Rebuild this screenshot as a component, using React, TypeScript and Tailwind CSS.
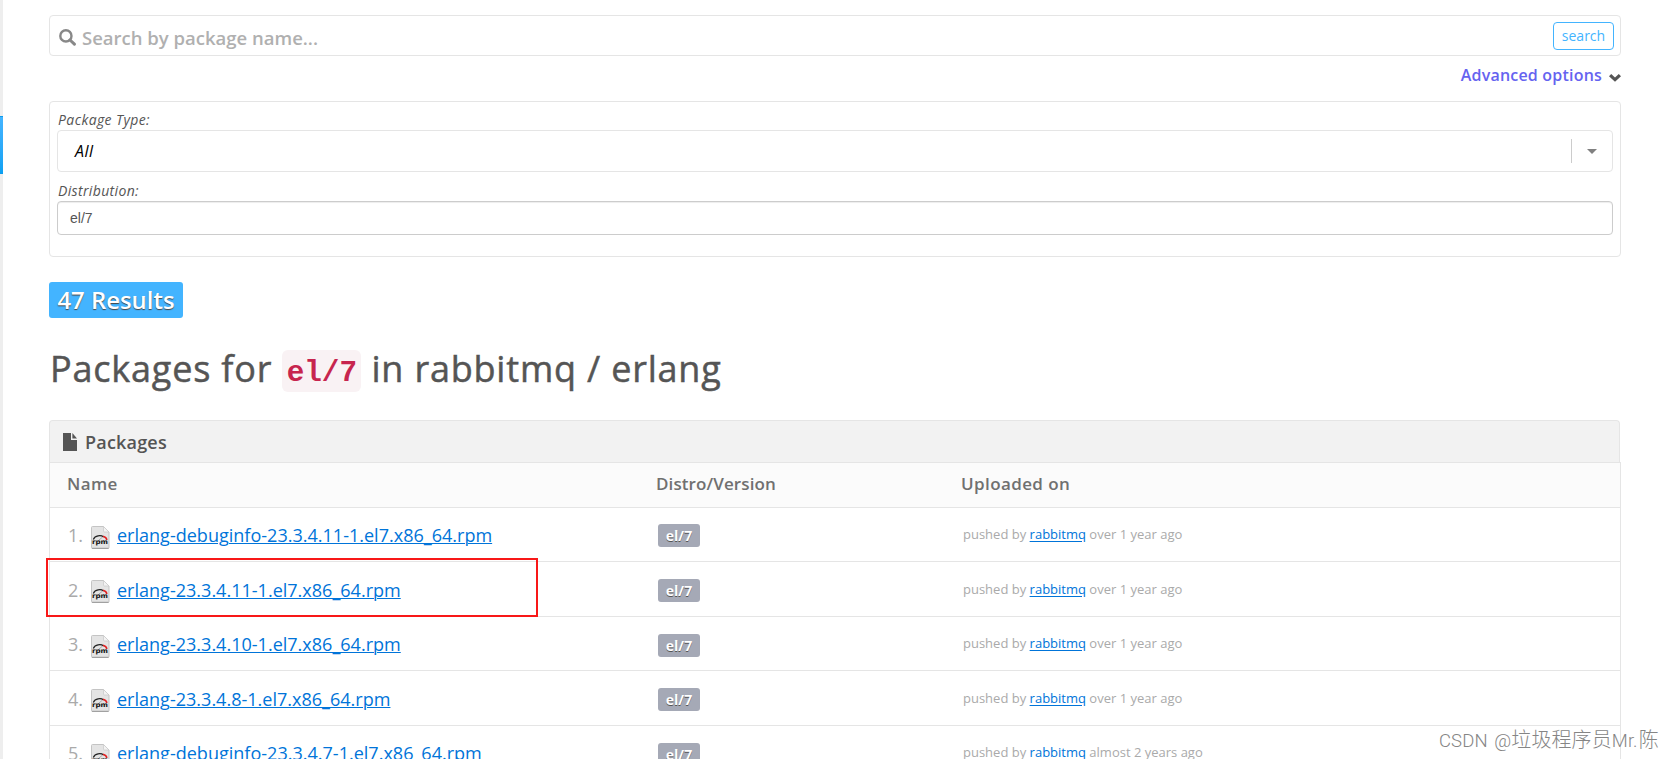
import React from "react";

interface Package {
  name: string;
  distro: string;
  user: string;
  uploaded: string;
}

const packages: Package[] = [
  {
    name: "erlang-debuginfo-23.3.4.11-1.el7.x86_64.rpm",
    distro: "el/7",
    user: "rabbitmq",
    uploaded: "over 1 year ago",
  },
  {
    name: "erlang-23.3.4.11-1.el7.x86_64.rpm",
    distro: "el/7",
    user: "rabbitmq",
    uploaded: "over 1 year ago",
  },
  {
    name: "erlang-23.3.4.10-1.el7.x86_64.rpm",
    distro: "el/7",
    user: "rabbitmq",
    uploaded: "over 1 year ago",
  },
  {
    name: "erlang-23.3.4.8-1.el7.x86_64.rpm",
    distro: "el/7",
    user: "rabbitmq",
    uploaded: "over 1 year ago",
  },
  {
    name: "erlang-debuginfo-23.3.4.7-1.el7.x86_64.rpm",
    distro: "el/7",
    user: "rabbitmq",
    uploaded: "almost 2 years ago",
  },
];

const SearchIcon = () => (
  <svg className="mt-1 h-[17px] w-[17px] shrink-0" viewBox="0 0 17 17" fill="none">
    <circle cx="6.9" cy="6.9" r="5.6" stroke="#888" strokeWidth="2.4" />
    <path d="M11 11l4.4 4.2" stroke="#888" strokeWidth="3" strokeLinecap="round" />
  </svg>
);

const ChevronIcon = () => (
  <svg className="mt-[2px] h-[9px] w-3 shrink-0" viewBox="0 0 12 9">
    <path d="M0 3.2L2.2 1 6 4.5 9.8 1 12 3.2 6 8.8z" fill="#555" />
  </svg>
);

const FileIcon = () => (
  <svg className="h-[18px] w-[14px] shrink-0" viewBox="0 0 14 18">
    <path d="M0 0h8v7h6v11H0z" fill="#555" />
    <path d="M9.4 0L14 5.6H9.4z" fill="#555" />
  </svg>
);

const RpmIcon = () => (
  <svg className="h-[23px] w-[19px] shrink-0" viewBox="0 0 19 23">
    <path
      d="M1.5.5h11l5.500 5.500v15.500q0 1-1 1h-15.500q-1 0-1-1v-20q0-1 1-1z"
      fill="#e4e4e4"
      stroke="#c4c4c4"
    />
    <path d="M12.500.5v4.500q0 1 1 1h4.500z" fill="#f3f3f3" stroke="#c8c8c8" strokeWidth=".7" />
    <path d="M1 22.300h16.500" stroke="#999" strokeWidth="1" />
    <path d="M2.300 13.500C4 9.300 10 8.800 12.500 11" fill="none" stroke="#222" strokeWidth="1.200" />
    <path d="M12 10.300C14.500 11 15.600 12.300 15.900 14" fill="none" stroke="#e02020" strokeWidth="1.500" />
    <path d="M8 14l3-2.500" stroke="#999" strokeWidth=".8" />
    <text
      x="1"
      y="17.500"
      fontFamily="DejaVu Sans"
      fontWeight="700"
      fontSize="6.600"
      textLength="16"
      lengthAdjust="spacingAndGlyphs"
      fill="#111"
    >
      rpm
    </text>
  </svg>
);

const SearchBar = () => (
  <div className="flex h-[41px] items-center rounded border border-[#e5e5e5] pr-[6px] pl-[9px]">
    <SearchIcon />
    <div className="ml-[6px] flex-1 pt-[5px] text-[18.500px] leading-[30px] font-semibold text-[#b0b0b0]">
      Search by package name...
    </div>
    <button className="h-7 w-[61px] rounded border border-[#43b4ff] text-sm leading-[25px] text-[#43b4ff]">
      search
    </button>
  </div>
);

const Filters = () => (
  <div className="mt-[11px] h-[156px] rounded border border-[#e5e5e5] px-[7px] pt-[7px] text-sm text-[#555]">
    <div className="h-[21px] pl-px leading-[21px] tracking-[0.4px] italic">Package Type:</div>
    <div className="flex h-[42px] items-center rounded border border-[#e5e5e5] pl-[17px] text-base text-black italic">
      <span className="flex-1 tracking-[0.5px]">All</span>
      <span className="h-6 w-px bg-[#ccc]" />
      <svg className="mr-[15px] ml-[15px] h-[5px] w-[10px]" viewBox="0 0 10 5">
        <path d="M0 0h10L5 5z" fill="#808080" />
      </svg>
    </div>
    <div className="mt-2 h-[21px] pl-px leading-[21px] tracking-[0.35px] italic">Distribution:</div>
    <div className="h-[34px] rounded border border-[#ccc] pl-3 font-['Liberation_Sans',sans-serif] leading-8 shadow-[inset_0_1px_1px_rgba(0,0,0,0.075)]">
      el/7
    </div>
  </div>
);

const PackageRow = ({ pkg, index }: { pkg: Package; index: number }) => (
  <div className="flex h-[54.600px] shrink-0 border-b border-[#e5e5e5] pt-[0.400px]">
    <div className="flex w-[608px] pl-[18px] text-[18.040px] leading-[55px]">
      <span className="w-[22px] text-[#aaa]">{index + 1}.</span>
      <span className="mt-[17.600px] mr-[7.500px] ml-[0.500px]">
        <RpmIcon />
      </span>
      <a href="#" className="text-[#0074d9] underline decoration-1 underline-offset-[1px]">
        {pkg.name}
      </a>
    </div>
    <div className="w-[305px]">
      <span className="mt-[16.400px] block h-[23px] w-[42px] rounded-[3px] bg-[#a5a9b6] text-center text-sm leading-[23px] font-bold text-white [text-shadow:0_1px_0_#555]">
        {pkg.distro}
      </span>
    </div>
    <div className="text-[13px] leading-[53.400px] text-[#aaa]">
      pushed by{" "}
      <a href="#" className="text-[#0074d9] underline underline-offset-2">
        {pkg.user}
      </a>{" "}
      {pkg.uploaded}
    </div>
  </div>
);

const PackageTable = () => (
  <div>
    <div className="mr-px flex h-[42px] items-center rounded-t border border-b-0 border-[#e5e5e5] bg-[#f2f2f2] pl-[13px] text-lg font-semibold text-[#555]">
      <FileIcon />
      <span className="ml-2 tracking-[0.2px]">Packages</span>
    </div>
    <div className="border border-b-0 border-[#e5e5e5]">
      <div className="flex h-[44.600px] border-b border-[#e5e5e5] bg-[#fbfbfb] text-[17px] leading-[42px] font-semibold text-[#707070]">
        <div className="w-[606px] pl-[17px] tracking-[0.4px]">Name</div>
        <div className="w-[305px] tracking-[0.1px]">Distro/Version</div>
        <div className="tracking-[0.4px]">Uploaded on</div>
      </div>
      {packages.map((pkg, index) => (
        <PackageRow key={pkg.name} pkg={pkg} index={index} />
      ))}
    </div>
  </div>
);

const App: React.FC = () => {
  return (
    <div className="relative flex h-[759px] w-[1674px] overflow-hidden bg-white font-['Open_Sans','Noto_Sans_CJK_SC',sans-serif]">
      <aside className="w-[3px] shrink-0 bg-[#eee] pt-[116px]">
        <div className="h-[58px] border-y border-[#0c9bec] bg-gradient-to-b from-[#43b4ff] to-[#0ba1f3]" />
      </aside>

      <main className="ml-[46px] w-[1572px] pt-[15px]">
        <SearchBar />
        <div className="mt-[7px] flex h-[27px] items-center justify-end text-base font-semibold text-[#6563f0]">
          <span className="mr-[7px] pb-[3px] tracking-[0.2px]">Advanced options</span>
          <ChevronIcon />
        </div>
        <Filters />

        <div className="mt-[25px] h-9 w-[134px] rounded-[3px] bg-[#43b4ff] text-center text-[23.900px] leading-9 font-semibold text-white [text-shadow:0_1px_1px_#444]">
          47 Results
        </div>

        <h1 className="mt-[26px] flex h-[50px] items-center pl-px text-4xl tracking-[0.8px] whitespace-pre text-[#555] [-webkit-text-stroke:0.5px_#555]">
          <span>Packages for </span>
          <code className="mt-[4px] h-[42px] w-[79px] rounded-md bg-[#f9f2f4] text-center font-['Liberation_Mono',monospace] text-[29.300px] leading-[47px] font-bold tracking-normal text-[#c7254e] [-webkit-text-stroke:0]">
            el/7
          </code>
          <span> in rabbitmq / erlang</span>
        </h1>

        <div className="mt-[26px]">
          <PackageTable />
        </div>
      </main>

      {/* highlighted package */}
      <div className="absolute top-[558px] left-[46px] h-[59px] w-[492px] border-2 border-[#f81818]" />

      <div className="absolute top-[726px] left-[1439px] font-['Roboto','Noto_Sans_CJK_SC',sans-serif] text-[18.500px] leading-[30px] font-light tracking-[0.1px] whitespace-nowrap text-[#858585]">
        CSDN <span className="ml-[2px]">@</span>
        <span className="text-xl leading-none">垃圾程序员</span>Mr.
        <span className="ml-px text-xl leading-none">陈</span>
      </div>
    </div>
  );
};

export default App;
